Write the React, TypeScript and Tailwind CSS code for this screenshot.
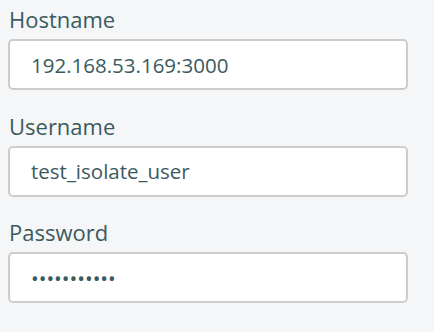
export default function App() {
  const fields = [
    { label: 'Hostname', value: '192.168.53.169:3000', type: 'text' },
    { label: 'Username', value: 'test_isolate_user', type: 'text' },
    { label: 'Password', value: 'abcdefghijk', type: 'password' },
  ]

  return (
    <div className="min-h-[332px] w-[434px] bg-[#f5f6f8] px-2 pt-[5px] font-['Open_Sans',sans-serif] text-[#3a5a60]">
      <div className="flex w-[400px] flex-col gap-[21.5px]">
        {fields.map((f) => (
          <div key={f.label} className="flex flex-col gap-[6px]">
            <label className="pl-[1px] text-[22px] leading-[28px]">{f.label}</label>
            <input
              type={f.type}
              defaultValue={f.value}
              readOnly
              className="h-[51px] w-full rounded-[5px] border-2 border-[#cccccc] bg-white px-[21px] text-[20.5px] text-[#3a5a60] outline-none"
            />
          </div>
        ))}
      </div>
    </div>
  )
}
